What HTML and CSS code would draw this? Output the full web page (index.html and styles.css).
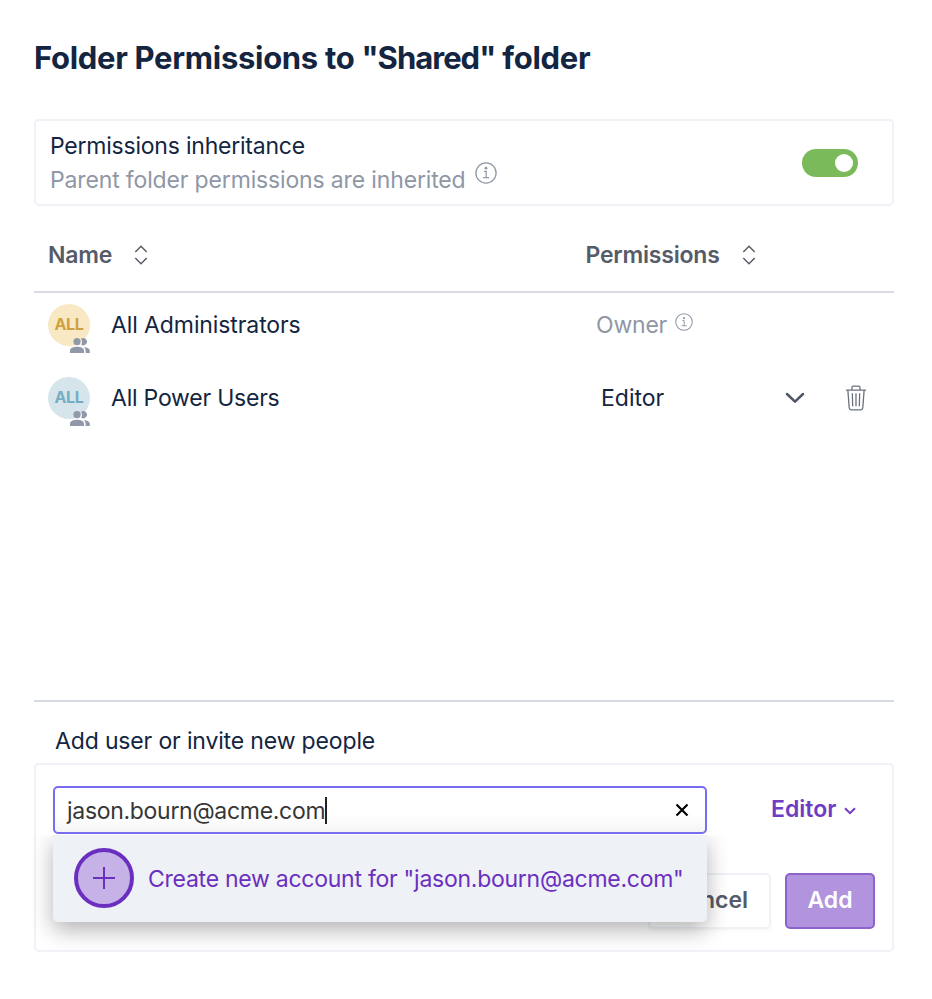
FILE: index.html
```html
<!DOCTYPE html>
<html lang="en">
<head>
<meta charset="utf-8">
<title>Folder Permissions</title>
<link rel="stylesheet" href="styles.css">
</head>
<body>
<svg class="defs" width="0" height="0" aria-hidden="true">
  <symbol id="info" viewBox="0 0 22 22"><g fill="none" stroke="currentColor"><circle cx="11" cy="11" r="10.1" stroke-width="1.3"/><path d="M9 9.3h2.2v6.2M8.2 15.6h6" stroke-width="1.2"/></g><circle cx="11" cy="6.2" r="1.4" fill="currentColor"/></symbol>
  <symbol id="sort" viewBox="0 0 14 20"><path d="M1.3 7 7 1.3 12.7 7M1.3 13 7 18.7 12.7 13" fill="none" stroke="currentColor" stroke-width="1.5"/></symbol>
  <symbol id="people" viewBox="0 0 20 15"><g fill="currentColor"><circle cx="7" cy="3.7" r="3.6"/><path d="M0 15v-2.2C0 10 3.4 8.800 7 8.800s7 1.200 7 4V15z"/><path d="M11.200.8a3.600 3.600 0 1 1 0 5.800c1.100-1.800 1.100-4 0-5.800z"/><path d="M13.700 8.900c3.400.3 6.100 1.500 6.100 4V15h-4.200v-2.200c0-1.700-.7-3-1.900-3.900z"/></g></symbol>
</svg>
<main class="dialog">
  <h1 class="title">Folder Permissions to <span class="folder-name">"Shared"</span> folder</h1>

  <section class="inherit">
    <div>
      <div class="inherit-name">Permissions inheritance</div>
      <div class="inherit-note">Parent folder permissions are inherited <svg class="info"><use href="#info"/></svg></div>
    </div>
    <div class="toggle"><span class="knob"></span></div>
  </section>

  <div class="head">
    <div class="col-name"><span class="h-name">Name</span><svg class="sort"><use href="#sort"/></svg></div>
    <div class="col-perm"><span class="h-perm">Permissions</span><svg class="sort"><use href="#sort"/></svg></div>
  </div>

  <div class="rows">
    <div class="row">
      <div class="avatar gold">ALL<svg class="people"><use href="#people"/></svg></div>
      <div class="who admins">All Administrators</div>
      <div class="owner">Owner</div><svg class="info small"><use href="#info"/></svg>
    </div>
    <div class="row">
      <div class="avatar teal">ALL<svg class="people"><use href="#people"/></svg></div>
      <div class="who power">All Power Users</div>
      <div class="role">Editor</div>
      <svg class="chev" viewBox="0 0 20 12"><path d="M2 2l8 7.600L18 2" fill="none" stroke="currentColor" stroke-width="2.500" stroke-linecap="round" stroke-linejoin="round"/></svg>
      <svg class="trash" viewBox="0 0 22 26"><g fill="none" stroke="currentColor" stroke-width="1.300"><path d="M1 5.200h20M7 5V2.400Q7 1.200 8.200 1.200h5.600Q15 1.200 15 2.400V5M2.900 5.400l1.300 17.500q.2 1.900 2 1.900h9.600q1.800 0 2-1.900l1.300-17.500M7.300 8.200l.4 13M11 8.200v13M14.700 8.200l-.4 13"/></g></svg>
    </div>
  </div>

  <div class="add-label">Add user or invite new people</div>
  <section class="add-card">
    <div class="add-top">
      <div class="field">
        <span class="email">jason.bourn@acme.com</span><span class="caret"></span>
        <svg class="clear" viewBox="0 0 14 14"><path d="M1.500 1.500l11 11M12.500 1.500l-11 11" stroke="#000" stroke-width="2.200"/></svg>
        <div class="menu">
          <span class="plus"><svg viewBox="0 0 22 22"><path d="M11 0v22M0 11h22" stroke="currentColor" stroke-width="2"/></svg></span>
          <span class="create">Create new account for "jason.bourn@acme.com"</span>
        </div>
      </div>
      <div class="picker"><span>Editor</span><svg viewBox="0 0 12 8"><path d="M1 1.200l5 5 5-5" fill="none" stroke="currentColor" stroke-width="2"/></svg></div>
    </div>
    <div class="actions">
      <button class="btn cancel">Cancel</button>
      <button class="btn add">Add</button>
    </div>
  </section>
</main>
</body>
</html>
```
FILE: styles.css
```css
* { box-sizing: border-box; }
body { margin: 0; background: #fff; color: #132540; font: 400 23px/34px Inter, "Liberation Sans", sans-serif; white-space: nowrap; }
svg { flex: none; display: block; }
.defs { position: absolute; }
.dialog { width: 860px; margin-left: 34px; padding-top: 38px; }
.title { margin: 0 0 41px; font-size: 31px; line-height: 40px; font-weight: 650; letter-spacing: -.3px; }
.folder-name { letter-spacing: -.98px; }

.inherit { height: 87px; border: 2px solid #f1f2f8; border-radius: 5px; padding: 8px 34px 0 14px; display: flex; justify-content: space-between; }
.inherit-name { letter-spacing: -.22px; height: 33px; line-height: 34px; }
.inherit-note { display: flex; line-height: 36px; color: #8f97a6; letter-spacing: -.15px; }
.info { width: 22px; height: 22px; color: #8f97a6; margin: 0 0 0 9px; }
.toggle { width: 56px; height: 28px; margin-top: 20px; border-radius: 14px; background: #7aba5a; display: flex; justify-content: flex-end; align-items: center; padding-right: 5px; }
.knob { width: 18px; height: 18px; border-radius: 50%; background: #fff; }

.head { height: 87px; border-bottom: 2px solid #d9dae7; display: flex; align-items: center; color: #555c69; font-weight: 600; padding: 13px 0 0 14px; letter-spacing: -.2px; }
.col-name { width: 537.5px; }
.col-name, .col-perm { display: flex; align-items: center; height: 34px; }
.sort { width: 14px; height: 20px; margin-left: 22px; }
.rows { height: 409px; padding-top: 11px; border-bottom: 2px solid #d6dae3; }
.row { height: 73px; padding-left: 14px; display: flex; align-items: flex-start; line-height: 42px; }
.avatar { width: 42px; height: 42px; border-radius: 50%; font-size: 16px; line-height: 40px; font-weight: 700; letter-spacing: -.3px; text-align: center; position: relative; }
.gold { background: #f8e8c4; color: #d0a03f; }
.teal { background: #d5e5eb; color: #75adc2; }
.people { position: absolute; left: 22px; top: 34px; width: 20px; height: 15px; color: #9198a8; }
.who { width: 485px; margin-left: 21px; }
.admins { letter-spacing: -.1px; }
.power { letter-spacing: -.22px; }
.owner { color: #8f97a6; letter-spacing: -.2px; }
.info.small { width: 18px; height: 18px; margin: 9px 0 0 7.5px; }
.role { width: 184px; margin-left: 5px; }
.chev { width: 20px; height: 12px; margin-top: 15px; color: #4d5463; }
.trash { width: 22px; height: 26px; margin: 8px 0 0 40px; color: #6b7280; }

.add-label { padding: 22px 0 0 21px; height: 61px; letter-spacing: -.15px; }
.add-card { height: 188.5px; border: 2px solid #f1f2f8; border-radius: 5px; padding: 21px 17px 0; }
.add-top { display: flex; }
.field { position: relative; width: 654px; height: 48px; border: 2px solid #786df0; border-radius: 5px; display: flex; align-items: center; padding: 0 16px 0 12px; background: linear-gradient(#fff 60%, #f5f5f6); color: #363636; }
.email { letter-spacing: -.3px; padding-top: 2px; }
.caret { width: 1.5px; height: 27px; background: #222; }
.clear { width: 14px; height: 14px; margin-left: auto; }
.menu { position: absolute; z-index: 2; left: -2px; top: 47px; width: 654px; height: 87px; background: #eef1f6; border-radius: 0 0 5px 5px; box-shadow: 0 8px 22px rgba(0,0,0,.3); display: flex; align-items: center; padding: 0 0 1px 21px; color: #6b2fc0; clip-path: inset(0 -40px -50px -40px); }
.plus { width: 60px; height: 60px; border: 4px solid #6b2fc0; border-radius: 50%; background: #c6b2e6; display: flex; align-items: center; justify-content: center; }
.plus svg { width: 22px; height: 22px; }
.create { margin-left: 14px; letter-spacing: -.26px; padding-top: 2px; }
.picker { height: 34px; margin: 6px 0 0 64px; display: flex; align-items: center; color: #6f3cc3; font-weight: 600; }
.picker svg { width: 12px; height: 8px; margin: 4px 0 0 8px; }
.actions { display: flex; justify-content: flex-end; gap: 14px; margin-top: 39px; }
.btn { height: 56px; border: 2px solid #f1f2f8; border-radius: 5px; background: #fff; font: 600 23px/34px Inter, "Liberation Sans", sans-serif; padding: 0 0 3px; }
.cancel { width: 123px; color: #555c69; box-shadow: 0 2px 3px rgba(0,0,0,.03); }
.add { width: 90px; color: #fff; background: #b193de; border-color: #8d62cd; }
```
